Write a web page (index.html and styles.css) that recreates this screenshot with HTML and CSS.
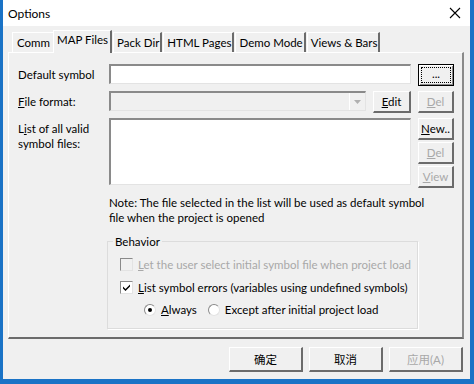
FILE: index.html
```html
<!DOCTYPE html>
<html lang="en">
<head>
    <meta charset="UTF-8">
    <title>Options</title>
    <link rel="stylesheet" href="styles.css">
</head>
<body>
    <div class="window">
        <div class="titlebar">
            <span class="title">Options</span>
            <svg class="close" width="12" height="12" viewBox="0 0 12 12"><path d="M1 1L11 11M11 1L1 11" stroke="#000" stroke-width="1.1"/></svg>
        </div>

        <div class="client">
            <div class="tabs">
                <div class="tab">Comm</div>
                <div class="tab active">MAP Files</div>
                <div class="tab">Pack Dir</div>
                <div class="tab">HTML Pages</div>
                <div class="tab">Demo Mode</div>
                <div class="tab">Views &amp; Bars</div>
            </div>

            <div class="panel">
                <div class="row">
                    <div class="label">Default symbol</div>
                    <div class="field"><div class="edit"></div></div>
                    <div class="side"><button class="btn default"><span class="focus">...</span></button></div>
                </div>

                <div class="row">
                    <div class="label"><u>F</u>ile format:</div>
                    <div class="field combo-row">
                        <div class="combo">
                            <span class="arrow">
                                <svg width="7" height="4" viewBox="0 0 7 4"><path d="M0 0H7L3.5 4Z" fill="#b0b0b0"/></svg>
                            </span>
                        </div>
                        <button class="btn small"><u>E</u>dit</button>
                    </div>
                    <div class="side"><button class="btn disabled"><u>D</u>el</button></div>
                </div>

                <div class="row">
                    <div class="label">L<u>i</u>st of all valid<br>symbol files:</div>
                    <div class="field"><div class="edit list"></div></div>
                    <div class="side stack">
                        <button class="btn"><u>N</u>ew..</button>
                        <button class="btn disabled"><u>D</u>el</button>
                        <button class="btn disabled"><u>V</u>iew</button>
                    </div>
                </div>

                <p class="note">Note: The file selected in the list will be used as default symbol<br>file when the project is opened</p>

                <div class="group">
                    <span class="group-title">Behavior</span>
                    <div class="check disabled">
                        <span class="box"></span>
                        <span><u>L</u>et the user select initial symbol file when project load</span>
                    </div>
                    <div class="check">
                        <span class="box">
                            <svg width="9" height="9" viewBox="0 0 9 9"><path d="M1 3.5L3.5 6L8 1.5V3.5L3.5 8L1 5.5Z" fill="#000"/></svg>
                        </span>
                        <span><u>L</u>ist symbol errors (variables using undefined symbols)</span>
                    </div>
                    <div class="radios">
                        <div class="radio on"><span class="dot"></span><span><u>A</u>lways</span></div>
                        <div class="radio"><span class="dot"></span><span>Except after initial project load</span></div>
                    </div>
                </div>
            </div>

            <div class="footer">
                <button class="btn wide">确定</button>
                <button class="btn wide">取消</button>
                <button class="btn wide disabled">应用(A)</button>
            </div>
        </div>
    </div>
</body>
</html>
```

FILE: styles.css
```css
/* Рамка вікна */
body {
    margin: 0;
    background: #1a73c6;
    font-family: 'Lato', 'Noto Sans CJK SC', sans-serif;
    font-size: 11.5px;
    color: #000;
}

.window {
    margin: 0 4px 5px 3px;
    height: 379px;
    background: #f0f0f0;
    display: flex;
    flex-direction: column;
}

.titlebar {
    height: 26px;
    background: #fff;
    display: flex;
    align-items: center;
    justify-content: space-between;
    padding: 0 9px 0 5px;
}

.title {
    font-size: 12px;
}

.client {
    flex: 1;
    padding: 4px 6px 0 5px;
    display: flex;
    flex-direction: column;
}

/* Вкладки */
.tabs {
    display: flex;
    align-items: flex-end;
    height: 22px;
    padding-left: 4px;
    white-space: nowrap;
}

.tab {
    height: 19px;
    line-height: 19px;
    padding: 0 1px 0 3px;
    margin-right: 1px;
    border-left: 1px solid #fff;
    border-top: 1px solid #fff;
    border-right: 2px solid #6b6b6b;
}

.tab:first-child {
    border-right: none;
    margin-right: 0;
    padding: 0 3px 0 4px;
}

.tab.active {
    height: 22px;
    line-height: 18px;
    padding: 0 2px 0 3px;
    margin: 0 1px 0 0;
    position: relative;
    top: 1px;
    background: #f0f0f0;
}

.panel {
    height: 287px;
    border-left: 1px solid #fff;
    border-top: 1px solid #fff;
    border-right: 2px solid #8a8a8a;
    border-bottom: 2px solid #6b6b6b;
    padding: 11px 8px 0 9px;
    box-sizing: border-box;
}

/* Рядки форми */
.row {
    display: flex;
    align-items: flex-start;
    margin-bottom: 5px;
}

.label {
    width: 91px;
    line-height: 15px;
    padding-top: 3px;
}

.field {
    width: 303px;
}

.side {
    width: 36px;
    margin-left: 7px;
}

.stack {
    display: flex;
    flex-direction: column;
    gap: 2px;
}

.edit {
    height: 20px;
    background: #fff;
    border-top: 2px solid #8a8a8a;
    border-left: 2px solid #8a8a8a;
    border-right: 1px solid #e3e3e3;
    border-bottom: 1px solid #e3e3e3;
    box-sizing: border-box;
}

.edit.list {
    height: 67px;
}

.combo-row {
    display: flex;
    gap: 7px;
}

.combo {
    flex: 1;
    height: 20px;
    background: #f0f0f0;
    border-top: 2px solid #8a8a8a;
    border-left: 2px solid #8a8a8a;
    border-right: 1px solid #e3e3e3;
    border-bottom: 1px solid #e3e3e3;
    box-sizing: border-box;
    display: flex;
    justify-content: flex-end;
}

.arrow {
    width: 15px;
    display: flex;
    align-items: center;
    justify-content: center;
    border-left: 1px solid #fff;
}

/* Кнопки */
.btn {
    font-family: inherit;
    font-size: 11.5px;
    height: 22px;
    width: 36px;
    padding: 0;
    background: #f0f0f0;
    border-top: 1px solid #fff;
    border-left: 1px solid #fff;
    border-right: 2px solid #6b6b6b;
    border-bottom: 2px solid #6b6b6b;
    color: #000;
}

.btn.small {
    width: 38px;
}

.btn.default {
    border: 1px solid #000;
    box-shadow: inset 1px 1px 0 #fff, inset -1px -1px 0 #8a8a8a;
}

.focus {
    display: block;
    margin: 2px;
    height: 14px;
    line-height: 12px;
    border: 1px dotted #000;
}

.btn.disabled {
    color: #a8a8a8;
}

.note {
    margin: 7px 0 0 91px;
    line-height: 15px;
    white-space: nowrap;
}

/* Група Behavior */
.group {
    position: relative;
    margin: 16px 0 0 89px;
    width: 311px;
    height: 88px;
    box-sizing: border-box;
    padding: 11px 0 0 12px;
    border: 1px solid #dcdcdc;
    box-shadow: 1px 1px 0 #fff;
    white-space: nowrap;
}

.group-title {
    position: absolute;
    top: -8px;
    left: 5px;
    padding: 0 2px;
    line-height: 15px;
    background: #f0f0f0;
}

.check {
    display: flex;
    align-items: center;
    gap: 5px;
    height: 23px;
}

.check.disabled {
    color: #a8a8a8;
}

.box {
    width: 11px;
    height: 11px;
    flex: none;
    background: #fff;
    border-top: 1px solid #8a8a8a;
    border-left: 1px solid #8a8a8a;
    border-right: 1px solid #e3e3e3;
    border-bottom: 1px solid #e3e3e3;
    display: flex;
    align-items: center;
    justify-content: center;
}

.check.disabled .box {
    background: #f0f0f0;
}

.radios {
    display: flex;
    gap: 11px;
    padding-left: 24px;
    height: 21px;
    align-items: center;
}

.radio {
    display: flex;
    align-items: center;
    gap: 5px;
}

.dot {
    width: 10px;
    height: 10px;
    flex: none;
    border-radius: 50%;
    background: #fff;
    border: 1px solid #8a8a8a;
    border-right-color: #e3e3e3;
    border-bottom-color: #e3e3e3;
    position: relative;
}

.radio.on .dot::after {
    content: "";
    position: absolute;
    left: 3px;
    top: 3px;
    width: 4px;
    height: 4px;
    border-radius: 50%;
    background: #000;
}

/* Нижні кнопки */
.footer {
    display: flex;
    justify-content: flex-end;
    gap: 6px;
    padding: 8px 1px 0 0;
}

.btn.wide {
    width: 74px;
    height: 25px;
}
```
